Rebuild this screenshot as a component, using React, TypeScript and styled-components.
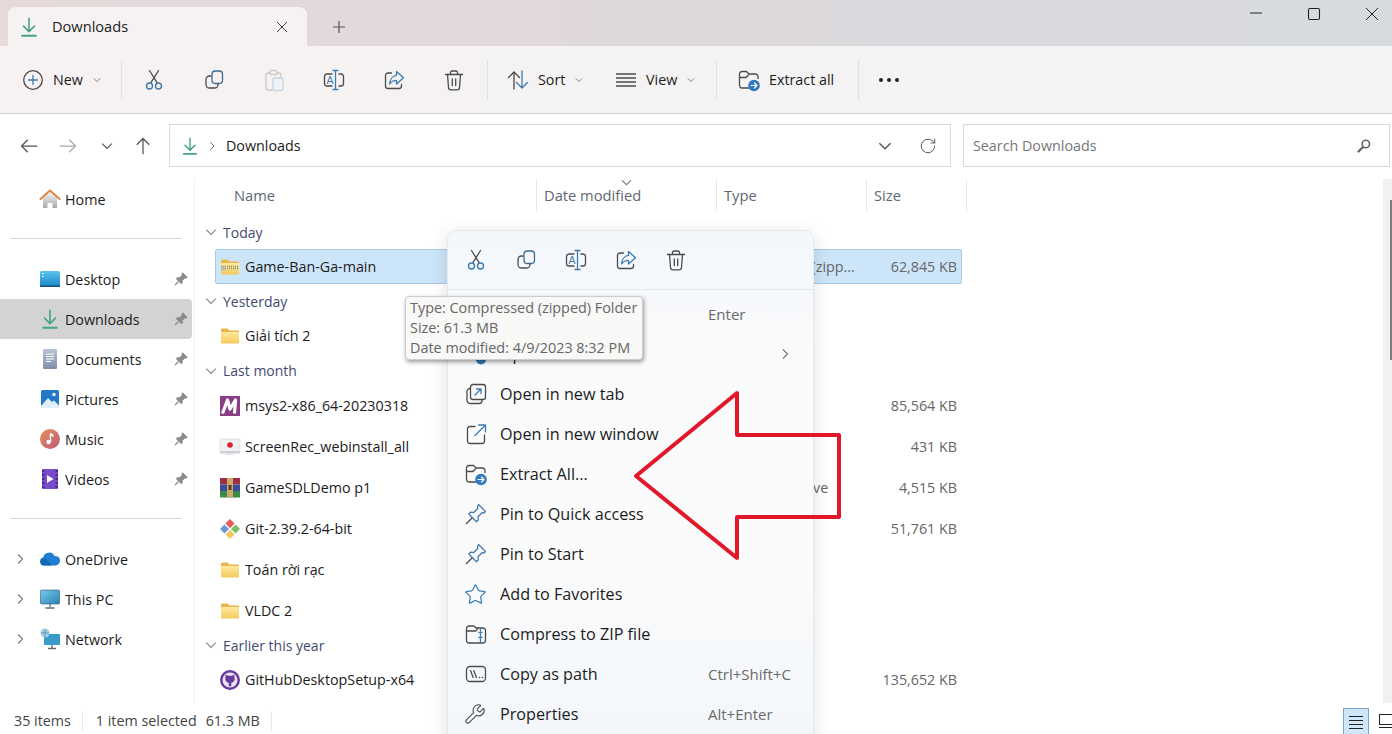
import React from 'react';
import styled, { createGlobalStyle } from 'styled-components';
import { RotateCw, Star, Wrench } from 'lucide-react';

const FONT = `"Open Sans", "Noto Sans", "Liberation Sans", sans-serif`;
const BLUE = '#3f7bb0';
const DARK = '#4b4b4b';

const GlobalStyle = createGlobalStyle`
  html, body {
    margin: 0;
    padding: 0;
    width: 100%;
    height: 100%;
    overflow: hidden;
    background: #fff;
  }
  #root {
    height: 100%;
  }
`;

/* icons */

const Ico: React.FC<{ size?: number; children: React.ReactNode }> = ({ size = 24, children }) => (
  <svg width={size} height={size} viewBox="0 0 24 24" fill="none" stroke={DARK} strokeWidth={1.3} strokeLinecap="round" strokeLinejoin="round">
    {children}
  </svg>
);

const DownloadIcon = ({ size = 24 }: { size?: number }) => (
  <Ico size={size}>
    <path d="M12 2.5V17M6 11l6 6 6-6" stroke="#45a287" strokeWidth={1.7} />
    <path d="M4.5 21.5h15" stroke="#45a287" strokeWidth={2} />
  </Ico>
);

const CutIcon = () => (
  <Ico>
    <path d="M7.5 2.5l7.6 12.2M16.5 2.5L8.9 14.7" />
    <circle cx="7.5" cy="18" r="3" stroke={BLUE} strokeWidth={1.4} />
    <circle cx="16.5" cy="18" r="3" stroke={BLUE} strokeWidth={1.4} />
  </Ico>
);

const CopyIcon = () => (
  <Ico>
    <rect x="10" y="3" width="10.5" height="12.5" rx="3.2" stroke="#3c6d92" />
    <path d="M9 8H7.5a3.5 3.5 0 0 0-3.5 3.5v5A3.5 3.5 0 0 0 7.5 20h5a3.5 3.5 0 0 0 3.5-3.5v-.5" />
  </Ico>
);

const PasteIcon = () => (
  <Ico>
    <path d="M8 5H6a2 2 0 0 0-2 2v13a2 2 0 0 0 2 2h4M15 5h2a2 2 0 0 1 2 2v2" stroke="#c9c9c9" />
    <rect x="8" y="2.5" width="7" height="4" rx="1.2" stroke="#c9c9c9" />
    <rect x="11" y="10" width="10" height="12.5" rx="2" stroke="#c5d5e2" fill="#eef3f7" />
  </Ico>
);

const RenameIcon = () => (
  <Ico>
    <path d="M10 6H5a2.5 2.5 0 0 0-2.5 2.5v7A2.5 2.5 0 0 0 5 18h5M17 6h2a2.5 2.5 0 0 1 2.5 2.5v7A2.5 2.5 0 0 1 19 18h-2" />
    <path d="M11 2.5h5M11 21.5h5M13.5 2.5v19" stroke={BLUE} />
    <text x="4.6" y="15.5" fontFamily="Liberation Sans, sans-serif" fontSize="10.5" fill={BLUE} stroke="none">A</text>
  </Ico>
);

const ShareIcon = () => (
  <Ico>
    <path d="M9.5 5H6a2.5 2.5 0 0 0-2.5 2.5v10.5A2.5 2.5 0 0 0 6 20.5h11a2.5 2.5 0 0 0 2.5-2.5v-1.5" />
    <path d="M14.5 3.5l7 6.2-7 6.3v-3.6c-3 0-5 1-6.8 3.6 0-4.3 2.6-8 6.8-8.6z" stroke={BLUE} />
  </Ico>
);

const TrashIcon = () => (
  <Ico>
    <path d="M3.5 6.5h17M8.5 6V4.5A1.5 1.5 0 0 1 10 3h4a1.5 1.5 0 0 1 1.5 1.5V6" />
    <path d="M5.5 6.5l1 13a2.5 2.5 0 0 0 2.5 2.4h6a2.5 2.5 0 0 0 2.5-2.4l1-13" />
    <path d="M10.3 11v6.5M13.7 11v6.5" />
  </Ico>
);

const PlusCircleIcon = () => (
  <Ico>
    <circle cx="12" cy="12" r="9.3" />
    <path d="M12 7.5v9M7.5 12h9" stroke={BLUE} />
  </Ico>
);

const SortIcon = () => (
  <Ico>
    <path d="M8 21V4M2.5 9.5L8 4l5.5 5.5" />
    <path d="M16 3v17M10.5 14.5L16 20l5.5-5.5" stroke={BLUE} />
  </Ico>
);

const ViewIcon = () => (
  <Ico>
    <path d="M2 6h20M2 10h20M2 14h20M2 18h20" strokeLinecap="butt" />
  </Ico>
);

const ExtractIcon = () => (
  <Ico>
    <path d="M12 20H5a2.5 2.5 0 0 1-2.5-2.5V6A2.5 2.5 0 0 1 5 3.5h4.5L12 6h6.5A2.5 2.5 0 0 1 21 8.5v2" />
    <path d="M3 9.5h6l2.5-2.5" />
    <circle cx="17" cy="17.5" r="5.8" fill="#2f79bd" stroke="none" />
    <path d="M14 17.5h5.6M17.5 15l2.5 2.5-2.5 2.5" stroke="#fff" strokeWidth={1.2} />
  </Ico>
);

const OpenWithIcon = () => (
  <Ico>
    <rect x="5" y="3" width="12" height="14" rx="2" />
    <circle cx="17" cy="17.5" r="5" fill="#2f79bd" stroke="none" />
  </Ico>
);

const NewTabIcon = () => (
  <Ico>
    <rect x="6.5" y="2.5" width="15" height="15" rx="2.5" />
    <path d="M6 6.5a3 3 0 0 0-3 3V18a3.5 3.5 0 0 0 3.5 3.5H15a3 3 0 0 0 3-3" />
    <path d="M11 13l6-6M12.5 7H17v4.5" stroke={BLUE} />
  </Ico>
);

const NewWindowIcon = () => (
  <Ico>
    <path d="M11 4.5H6A2.5 2.5 0 0 0 3.5 7v12A2.5 2.5 0 0 0 6 21.5h12a2.5 2.5 0 0 0 2.5-2.5v-6" />
    <path d="M11 13.5L21.5 3M14.5 3h7v7" stroke={BLUE} />
  </Ico>
);

const PinOutlineIcon = () => (
  <Ico>
    <path d="M14.5 2.5l7 7-1.5 1.5-2-.3-4 4 .3 3.2-1.8 1.8-7.7-7.7 1.8-1.8 3.2.3 4-4-.3-2z" stroke={BLUE} />
    <path d="M8 16l-5.5 5.5" />
  </Ico>
);

const ZipIcon = () => (
  <Ico>
    <path d="M2.5 6.5A2.5 2.5 0 0 1 5 4h5l2 2h7a2.5 2.5 0 0 1 2.5 2.5v10A2.5 2.5 0 0 1 19 21H5a2.5 2.5 0 0 1-2.5-2.5z" />
    <path d="M2.5 9h9.5l2-3" />
    <path d="M16.5 6v3M15 10.5h3M16.5 12v2M15 15.5h3M16.5 17v4" stroke={BLUE} />
  </Ico>
);

const PathIcon = () => (
  <Ico>
    <rect x="2.5" y="4.5" width="19" height="15" rx="3.5" />
    <path d="M6.5 8.5l2.6 7M9.8 8.5l2.6 7" />
    <path d="M15.5 15.5h.1M18.5 15.5h.1" strokeWidth={1.6} />
  </Ico>
);

const ChevronDown = ({ w = 9, c = '#666' }: { w?: number; c?: string }) => (
  <svg width={w} height={w} viewBox="0 0 10 10" fill="none" stroke={c} strokeWidth={1}>
    <path d="M1 3l4 4 4-4" />
  </svg>
);

const ChevronRight = ({ c = '#777', s = 12 }: { c?: string; s?: number }) => (
  <svg width={s} height={s} viewBox="0 0 12 12" fill="none" stroke={c} strokeWidth={1.1}>
    <path d="M4 1.5L8.5 6 4 10.5" />
  </svg>
);

const ArrowIcon = ({ dir, c = '#555' }: { dir: 'left' | 'right' | 'up'; c?: string }) => {
  const d = {
    left: 'M22 12H3M10.5 4.5L3 12l7.5 7.5',
    right: 'M2 12h19M13.5 4.5L21 12l-7.5 7.5',
    up: 'M12 22V3M4.5 10.5L12 3l7.5 7.5',
  }[dir];
  return (
    <svg width={20} height={20} viewBox="0 0 24 24" fill="none" stroke={c} strokeWidth={1.5}>
      <path d={d} />
    </svg>
  );
};

const SearchIcon = () => (
  <svg width={16} height={16} viewBox="0 0 16 16" fill="none" stroke="#666">
    <circle cx="9.8" cy="6" r="3.7" strokeWidth={1.6} />
    <path d="M7 9L2.5 13.5" strokeWidth={2.4} strokeLinecap="round" />
  </svg>
);

const PinIcon = () => (
  <svg width={16} height={16} viewBox="0 0 16 16" fill="#8b8b8b" stroke="#8b8b8b" strokeWidth={0.8} strokeLinejoin="round">
    <path d="M9.8 1.8l4.4 4.4-1 1-1.3-.2-2.6 2.6.2 2.2-1.1 1.1L3.2 7.7l1.1-1.1 2.2.2 2.6-2.6-.2-1.3z" />
    <path d="M5.3 10.7L2 14" strokeWidth={1.3} />
  </svg>
);

const FolderIcon = ({ zip }: { zip?: boolean }) => (
  <svg width={22} height={22} viewBox="0 0 22 22">
    <defs>
      <linearGradient id="folderBody" x1="0" y1="0" x2="0" y2="1">
        <stop offset="0" stopColor="#fdeb9e" />
        <stop offset="1" stopColor="#f5c95c" />
      </linearGradient>
    </defs>
    <path d="M2 5.5A1.5 1.5 0 0 1 3.5 3.500h5l2 2H19a1 1 0 0 1 1 1v3H2z" fill="#e8b64c" />
    <rect x="2" y="7" width="18" height="11.500" rx="1" fill="url(#folderBody)" />
    {zip && <path d="M2 10.500h18M2 12.500h18" stroke="#8d8a72" strokeWidth={1.4} strokeDasharray="1 1" />}
    {zip && <rect x="2" y="9.500" width="5" height="5" fill="#b9b9a8" opacity={0.7} />}
  </svg>
);

const MsysIcon = () => (
  <svg width={22} height={22} viewBox="0 0 22 22">
    <rect x="1" y="1" width="20" height="20" fill="#8a3f84" />
    <path d="M3.500 18.500L8.500 5l2.500 9L16.500 5l-1 13.500" fill="none" stroke="#fff" strokeWidth={3.2} strokeLinejoin="round" />
  </svg>
);

const ScreenRecIcon = () => (
  <svg width={22} height={22} viewBox="0 0 22 22">
    <rect x="1" y="3" width="20" height="13" rx="1" fill="#f1f1f3" stroke="#d4d4d8" strokeWidth={0.6} />
    <rect x="1" y="15" width="20" height="2.500" fill="#cfd1d6" />
    <circle cx="11" cy="9" r="2.800" fill="#d8232a" />
    <rect x="7" y="17.500" width="8" height="1.200" fill="#d9d9dd" />
  </svg>
);

const RarIcon = () => (
  <svg width={22} height={22} viewBox="0 0 22 22">
    <rect x="1" y="1" width="20" height="6.500" fill="#9c2f46" />
    <rect x="1" y="7.500" width="20" height="6.500" fill="#3a4d9a" />
    <rect x="1" y="14" width="20" height="6.500" fill="#3b8a4a" />
    <rect x="8" y="1" width="6" height="19.500" fill="#cfa76a" />
    <rect x="9.500" y="8" width="3" height="5" fill="#5a3b1d" />
  </svg>
);

const GitIcon = () => (
  <svg width={22} height={22} viewBox="0 0 22 22">
    <path d="M11 1l4.600 4.600-4.600 4.600-4.600-4.600z" fill="#e0605a" />
    <path d="M5.400 6.400L10 11l-4.600 4.600L1 11z" fill="#6a9ad6" />
    <path d="M16.600 6.400L21 11l-4.400 4.600L12 11z" fill="#7cbf6b" />
    <path d="M11 11.800l4.600 4.600L11 21l-4.600-4.600z" fill="#f0cc5f" />
  </svg>
);

const GitHubIcon = () => (
  <svg width={22} height={22} viewBox="0 0 22 22">
    <circle cx="11" cy="11" r="10" fill="#6a3a9c" />
    <circle cx="11" cy="11" r="7.500" fill="#ece6f3" />
    <path d="M6.800 5.500l2.200 1.200h4l2.200-1.200.4 3.200c.6 2.700-.8 4.600-3.300 5v3.500H9.700v-3.500c-2.500-.4-3.900-2.300-3.300-5z" fill="#6a3a9c" />
  </svg>
);

const HomeIcon = () => (
  <svg width={22} height={22} viewBox="0 0 22 22">
    <defs>
      <linearGradient id="homeBody" x1="0" y1="0" x2="0" y2="1">
        <stop offset="0" stopColor="#f4f4f4" />
        <stop offset="1" stopColor="#a9a9ab" />
      </linearGradient>
    </defs>
    <path d="M4 10l7-6 7 6v10h-4.500v-5h-5v5H4z" fill="url(#homeBody)" />
    <path d="M1.500 11L11 2.500 20.500 11" fill="none" stroke="#d98a4a" strokeWidth={2.200} strokeLinecap="round" strokeLinejoin="round" />
  </svg>
);

const DesktopIcon = () => (
  <svg width={22} height={22} viewBox="0 0 22 22">
    <defs>
      <linearGradient id="deskBody" x1="0" y1="0" x2="0" y2="1">
        <stop offset="0" stopColor="#5cc3ee" />
        <stop offset="1" stopColor="#1b86c6" />
      </linearGradient>
    </defs>
    <rect x="1" y="3" width="20" height="16" rx="1.500" fill="url(#deskBody)" />
    <rect x="1" y="17.500" width="20" height="1.500" fill="#14527d" />
    <path d="M3 5.500h1.500M3 8.500h1.500" stroke="#fff" strokeWidth={1.200} />
  </svg>
);

const DocsIcon = () => (
  <svg width={22} height={22} viewBox="0 0 22 22">
    <defs>
      <linearGradient id="docBody" x1="0" y1="0" x2="0" y2="1">
        <stop offset="0" stopColor="#b9c4d4" />
        <stop offset="1" stopColor="#7e8fa8" />
      </linearGradient>
    </defs>
    <rect x="4" y="1" width="14" height="20" rx="1" fill="url(#docBody)" />
    <path d="M7 6h8M7 8.500h8M7 11h8M7 13.500h5" stroke="#fff" strokeWidth={1} />
  </svg>
);

const PicturesIcon = () => (
  <svg width={22} height={22} viewBox="0 0 22 22">
    <rect x="2" y="2" width="18" height="18" rx="1.500" fill="#2378c7" />
    <path d="M2 18l7-8 4 4 2-1.500 5 5V20H2z" fill="#dff0fa" />
    <circle cx="15" cy="6.500" r="1.700" fill="#fff" />
  </svg>
);

const MusicIcon = () => (
  <svg width={22} height={22} viewBox="0 0 22 22">
    <defs>
      <linearGradient id="musicBody" x1="0" y1="0" x2="1" y2="1">
        <stop offset="0" stopColor="#e8905c" />
        <stop offset="1" stopColor="#b85a78" />
      </linearGradient>
    </defs>
    <circle cx="11" cy="11" r="10" fill="url(#musicBody)" />
    <path d="M11.500 5.500v8" stroke="#fff" strokeWidth={1.500} />
    <path d="M11.500 5.500c1 1.500 2.500 1.500 3 3" stroke="#fff" strokeWidth={1.500} fill="none" />
    <circle cx="9.500" cy="14" r="2.200" fill="#fff" />
  </svg>
);

const VideosIcon = () => (
  <svg width={22} height={22} viewBox="0 0 22 22">
    <rect x="3" y="1" width="16" height="20" rx="1" fill="#7a4bc9" />
    <path d="M3 3h2.500M3 7h2.500M3 11h2.500M3 15h2.500M3 19h2.500M16.500 3H19M16.500 7H19M16.500 11H19M16.500 15H19M16.500 19H19" stroke="#3f2278" strokeWidth={1.500} />
    <path d="M8 7l6.500 4L8 15z" fill="#fff" />
  </svg>
);

const OneDriveIcon = () => (
  <svg width={22} height={22} viewBox="0 0 22 22">
    <path d="M5 17.500a4 4 0 0 1-.8-7.900A6 6 0 0 1 15.500 8a4.800 4.800 0 0 1 1.500 9.500z" fill="#1f7fd0" />
    <path d="M5 17.500a3.500 3.500 0 0 1 0-7h2l6 7z" fill="#0f5fae" opacity={0.75} />
  </svg>
);

const PcIcon = () => (
  <svg width={22} height={22} viewBox="0 0 22 22">
    <defs>
      <linearGradient id="pcBody" x1="0" y1="0" x2="1" y2="1">
        <stop offset="0" stopColor="#79c9ea" />
        <stop offset="1" stopColor="#2a84b8" />
      </linearGradient>
    </defs>
    <rect x="1.500" y="2" width="19" height="14" rx="1" fill="url(#pcBody)" stroke="#35566e" strokeWidth={0.6} />
    <path d="M11 16v3M6.500 20h9" stroke="#5d6d79" strokeWidth={1.300} />
  </svg>
);

const NetworkIcon = () => (
  <svg width={22} height={22} viewBox="0 0 22 22">
    <rect x="5" y="6" width="16" height="11" rx="1" fill="#3a9ac9" />
    <path d="M13 17v3M9 20.500h8" stroke="#5d6d79" strokeWidth={1.300} />
    <circle cx="6" cy="5" r="4.500" fill="#a9cfe6" />
    <path d="M2 5h8M6 1v8" stroke="#5a8fb3" strokeWidth={0.9} />
  </svg>
);

const DetailsViewIcon = () => (
  <svg width={16} height={16} viewBox="0 0 16 16" fill="none" stroke="#222" strokeWidth={1}>
    <path d="M1 2.500h14M1 6.500h14M1 10.500h14M1 14.500h14" />
  </svg>
);

const TilesViewIcon = () => (
  <svg width={16} height={16} viewBox="0 0 16 16" fill="none" stroke="#222" strokeWidth={1}>
    <rect x="1.500" y="1.500" width="13" height="10" />
    <path d="M1 14.500h14" />
  </svg>
);

/* window shell */

const Window = styled.div`
  position: relative;
  width: 100vw;
  height: 100vh;
  overflow: hidden;
  display: flex;
  flex-direction: column;
  background: #fff;
  color: #1c1c1c;
  font-family: ${FONT};
  font-size: 14.3px;
`;

const TitleBar = styled.div`
  flex: 0 0 46px;
  display: flex;
  align-items: flex-end;
  padding-left: 8px;
  background: linear-gradient(90deg, #e6dadb 0%, #e1d8da 35%, #dcd9dd 60%, #d7dbdf 100%);
`;

const Tab = styled.div`
  width: 299px;
  height: 39px;
  box-sizing: border-box;
  display: flex;
  align-items: center;
  padding: 0 19px 0 10px;
  gap: 12px;
  background: #f7f2f2;
  border-radius: 8px 8px 0 0;
`;

const TabTitle = styled.span`
  flex: 1;
  font-size: 14.6px;
  padding-bottom: 2px;
`;

const NewTabButton = styled.div`
  width: 64px;
  height: 39px;
  display: flex;
  align-items: center;
  justify-content: center;
`;

const WindowControls = styled.div`
  margin-left: auto;
  margin-right: -9px;
  align-self: flex-start;
  display: flex;
`;

const WindowControl = styled.div`
  width: 58px;
  height: 28px;
  display: flex;
  align-items: center;
  justify-content: center;
`;

const Toolbar = styled.div`
  flex: 0 0 68px;
  box-sizing: border-box;
  display: flex;
  align-items: center;
  padding-left: 8px;
  background: linear-gradient(90deg, #f7f2f1 0%, #f5f2f2 35%, #f3f4f5 100%);
  border-bottom: 1px solid #cfcfcf;
`;

const ToolButton = styled.div<{ $w: number; $pad?: number }>`
  width: ${p => p.$w}px;
  height: 40px;
  box-sizing: border-box;
  display: flex;
  align-items: center;
  justify-content: ${p => (p.$pad === undefined ? 'center' : 'flex-start')};
  padding-left: ${p => p.$pad ?? 0}px;
  gap: 8px;
`;

const ToolChevron = styled.span`
  display: flex;
  margin-left: 2px;
`;

const ToolSeparator = styled.div`
  width: 1px;
  height: 40px;
  margin: 0 2px 0 3px;
  background: #e2e0e0;
`;

const Dots = styled.div`
  display: flex;
  gap: 4px;
`;

const Dot = styled.i`
  width: 4px;
  height: 4px;
  border-radius: 50%;
  background: #222;
`;

const AddressRow = styled.div`
  flex: 0 0 66px;
  box-sizing: border-box;
  display: flex;
  align-items: flex-start;
  padding: 10px 2px 0 10px;
`;

const NavButton = styled.div<{ $w: number }>`
  width: ${p => p.$w}px;
  height: 43px;
  display: flex;
  align-items: center;
  justify-content: center;
`;

const AddressBox = styled.div`
  width: 782px;
  height: 43px;
  margin-left: 9px;
  box-sizing: border-box;
  display: flex;
  align-items: center;
  padding: 0 13px 0 10px;
  border: 1px solid #d9d9d9;
`;

const CrumbSep = styled.span`
  display: flex;
  margin-left: 7px;
`;

const Crumb = styled.span`
  margin-left: 9px;
  flex: 1;
`;

const BoxEnd = styled.div`
  display: flex;
  align-items: center;
  gap: 27px;
`;

const SearchBox = styled.div`
  flex: 1;
  height: 43px;
  margin-left: 12px;
  box-sizing: border-box;
  display: flex;
  align-items: center;
  justify-content: space-between;
  padding: 0 17px 0 9px;
  border: 1px solid #d9d9d9;
  color: #777;
`;

/* sidebar */

const Body = styled.div`
  flex: 1;
  min-height: 0;
  display: flex;
`;

const Sidebar = styled.nav`
  flex: 0 0 195px;
  box-sizing: border-box;
  margin-top: -1px;
  border-right: 1px solid #f1f1f1;
`;

const NavItem = styled.div<{ $active?: boolean }>`
  width: 192px;
  height: 40px;
  box-sizing: border-box;
  display: flex;
  align-items: center;
  padding: 0 3px 0 14px;
  background: ${p => (p.$active ? '#d3d3d3' : 'transparent')};
  border-radius: 0 4px 4px 0;
`;

const Expander = styled.span`
  width: 25px;
  display: flex;
`;

const NavIcon = styled.span`
  width: 22px;
  height: 22px;
  display: flex;
  margin-right: 4px;
`;

const NavLabel = styled.span`
  flex: 1;
`;

const NavDivider = styled.div`
  height: 1px;
  margin: 19px 12px 20px 10px;
  background: #d6d6d6;
`;

/* file list */

const List = styled.section`
  flex: 1;
  min-width: 0;
`;

const ColumnHeader = styled.div`
  height: 31px;
  margin-bottom: 4px;
  width: 772px;
  display: grid;
  grid-template-columns: 342px 180px 150px 100px;
  color: #5d6873;
  font-size: 14.7px;
`;

const ColumnCell = styled.div<{ $pad: number }>`
  position: relative;
  display: flex;
  align-items: center;
  padding: 0 0 2px ${p => p.$pad}px;
  border-right: 1px solid #e6e6e6;
`;

const SortMark = styled.span`
  position: absolute;
  left: 84px;
  top: -3px;
  display: flex;
`;

const GroupTitle = styled.div<{ $h: number }>`
  height: ${p => p.$h}px;
  margin-left: 10px;
  display: flex;
  align-items: center;
  gap: 6px;
  color: #3f4b70;
  font-size: 14px;
`;

const Row = styled.div<{ $selected?: boolean }>`
  width: 747px;
  height: 35px;
  margin-left: 20px;
  box-sizing: border-box;
  display: grid;
  grid-template-columns: 508px 130px 1fr;
  align-items: center;
  background: ${p => (p.$selected ? '#cde5f9' : 'transparent')};
  border: 1px solid ${p => (p.$selected ? '#a5cbe9' : 'transparent')};
  border-radius: 2px;
  & + & {
    margin-top: 6px;
  }
`;

const NameCell = styled.div`
  display: flex;
  align-items: center;
  gap: 4px;
  padding-left: 3px;
`;

const TypeCell = styled.div`
  color: #666;
  white-space: nowrap;
`;

const SizeCell = styled.div`
  color: #666;
  text-align: right;
  padding-right: 4px;
`;

const ScrollTrack = styled.div`
  flex: 0 0 9px;
  margin-top: -1px;
  background: #f1f1f1;
  display: flex;
  justify-content: flex-end;
`;

const ScrollThumb = styled.div`
  width: 2px;
  height: 160px;
  margin-top: 21px;
  background: #7d7d7d;
`;

/* status bar */

const StatusBar = styled.footer`
  flex: 0 0 27px;
  box-sizing: border-box;
  display: flex;
  align-items: center;
  padding: 5px 0 0 14px;
  color: #444;
`;

const StatusText = styled.span`
  display: flex;
  gap: 9px;
  padding-right: 11px;
  height: 20px;
  line-height: 20px;
`;

const StatusDivider = styled.span`
  width: 1px;
  height: 20px;
  margin-right: 13px;
  background: #e8e8e8;
`;

const ViewSwitch = styled.div`
  margin-left: auto;
  display: flex;
  gap: 9px;
  width: 49px;
  align-self: flex-end;
`;

const ViewButton = styled.div<{ $on?: boolean }>`
  flex: 0 0 ${p => (p.$on ? 26 : 16)}px;
  height: 26px;
  box-sizing: border-box;
  display: flex;
  align-items: center;
  justify-content: center;
  background: ${p => (p.$on ? '#cfe5f8' : 'transparent')};
  border: ${p => (p.$on ? '1px solid #7ba6c6' : 'none')};
  border-bottom: none;
`;

/* overlays */

const ContextMenu = styled.div`
  position: absolute;
  left: 447px;
  top: 230px;
  width: 367px;
  height: 520px;
  box-sizing: border-box;
  border: 1px solid #e6e8ec;
  border-radius: 9px;
  background: linear-gradient(180deg, #f3f7fc 0%, #f9fafb 22%, #fbfbfb 60%, #f3f7fb 97%);
  box-shadow: 0 4px 18px rgba(0, 0, 0, 0.13);
  font-size: 16.2px;
`;

const QuickBar = styled.div`
  height: 58px;
  display: flex;
  align-items: center;
  padding-left: 3px;
  border-bottom: 1px solid #e3e7ec;
`;

const QuickAction = styled.div`
  width: 50px;
  display: flex;
  justify-content: center;
`;

const MenuItems = styled.div`
  padding-top: 4px;
`;

const MenuItem = styled.div`
  height: 40px;
  box-sizing: border-box;
  display: grid;
  grid-template-columns: 24px 196px 1fr;
  column-gap: 12px;
  align-items: center;
  padding: 0 22px 0 16px;
`;

const MenuIcon = styled.span`
  display: flex;
`;

const Shortcut = styled.span`
  font-size: 15px;
  color: #6a6a6a;
  white-space: nowrap;
`;

const Submenu = styled.span`
  justify-self: end;
  display: flex;
`;

const Tooltip = styled.div`
  position: absolute;
  left: 405px;
  top: 296px;
  width: 238px;
  height: 64px;
  box-sizing: border-box;
  padding: 1px 4px;
  background: #f8f8f6;
  border: 1px solid #cdcdcd;
  border-radius: 4px;
  box-shadow: 1px 2px 4px rgba(0, 0, 0, 0.4);
  color: #666;
  font-size: 14.4px;
  line-height: 20px;
  white-space: nowrap;
`;

const RedArrow = styled.svg`
  position: absolute;
  left: 630px;
  top: 386px;
`;

/* data */

const pinned: [string, React.ReactNode][] = [
  ['Desktop', <DesktopIcon />],
  ['Downloads', <DownloadIcon size={22} />],
  ['Documents', <DocsIcon />],
  ['Pictures', <PicturesIcon />],
  ['Music', <MusicIcon />],
  ['Videos', <VideosIcon />],
];

const places: [string, React.ReactNode][] = [
  ['OneDrive', <OneDriveIcon />],
  ['This PC', <PcIcon />],
  ['Network', <NetworkIcon />],
];

interface FileRow {
  name: string;
  icon: React.ReactNode;
  type?: string;
  size?: string;
  selected?: boolean;
}

const groups: { title: string; height: number; rows: FileRow[] }[] = [
  {
    title: 'Today',
    height: 34,
    rows: [{ name: 'Game-Ban-Ga-main', icon: <FolderIcon zip />, type: 'Compressed (zipp...', size: '62,845 KB', selected: true }],
  },
  {
    title: 'Yesterday',
    height: 34,
    rows: [{ name: 'Giải tích 2', icon: <FolderIcon /> }],
  },
  {
    title: 'Last month',
    height: 35,
    rows: [
      { name: 'msys2-x86_64-20230318', icon: <MsysIcon />, size: '85,564 KB' },
      { name: 'ScreenRec_webinstall_all', icon: <ScreenRecIcon />, size: '431 KB' },
      { name: 'GameSDLDemo p1', icon: <RarIcon />, type: 'WinRAR archive', size: '4,515 KB' },
      { name: 'Git-2.39.2-64-bit', icon: <GitIcon />, size: '51,761 KB' },
      { name: 'Toán rời rạc', icon: <FolderIcon /> },
      { name: 'VLDC 2', icon: <FolderIcon /> },
    ],
  },
  {
    title: 'Earlier this year',
    height: 34,
    rows: [{ name: 'GitHubDesktopSetup-x64', icon: <GitHubIcon />, size: '135,652 KB' }],
  },
];

const menu: { label: string; icon: React.ReactNode; shortcut?: string; more?: boolean }[] = [
  { label: 'Open', icon: <NewWindowIcon />, shortcut: 'Enter' },
  { label: 'Open with...', icon: <OpenWithIcon />, more: true },
  { label: 'Open in new tab', icon: <NewTabIcon /> },
  { label: 'Open in new window', icon: <NewWindowIcon /> },
  { label: 'Extract All...', icon: <ExtractIcon /> },
  { label: 'Pin to Quick access', icon: <PinOutlineIcon /> },
  { label: 'Pin to Start', icon: <PinOutlineIcon /> },
  { label: 'Add to Favorites', icon: <Star size={23} strokeWidth={1.3} color={BLUE} /> },
  { label: 'Compress to ZIP file', icon: <ZipIcon /> },
  { label: 'Copy as path', icon: <PathIcon />, shortcut: 'Ctrl+Shift+C' },
  { label: 'Properties', icon: <Wrench size={22} strokeWidth={1.2} color={DARK} />, shortcut: 'Alt+Enter' },
];

const App: React.FC = () => (
  <Window>
    <GlobalStyle />
    <TitleBar>
      <Tab>
        <DownloadIcon size={22} />
        <TabTitle>Downloads</TabTitle>
        <svg width={12} height={12} viewBox="0 0 12 12" stroke="#444" strokeWidth={1}>
          <path d="M1 1l10 10M11 1L1 11" />
        </svg>
      </Tab>
      <NewTabButton>
        <svg width={14} height={14} viewBox="0 0 14 14" stroke="#555" strokeWidth={1.2}>
          <path d="M7 1v12M1 7h12" />
        </svg>
      </NewTabButton>
      <WindowControls>
        <WindowControl>
          <svg width={14} height={14} viewBox="0 0 14 14" stroke="#222" strokeWidth={1}>
            <path d="M1 6h12" />
          </svg>
        </WindowControl>
        <WindowControl>
          <svg width={14} height={14} viewBox="0 0 14 14" fill="none" stroke="#222" strokeWidth={1.1}>
            <rect x="1.500" y="1.500" width="11" height="11" rx="1.500" />
          </svg>
        </WindowControl>
        <WindowControl>
          <svg width={14} height={14} viewBox="0 0 14 14" stroke="#222" strokeWidth={1}>
            <path d="M1 1l12 12M13 1L1 13" />
          </svg>
        </WindowControl>
      </WindowControls>
    </TitleBar>

    <Toolbar>
      <ToolButton $w={110} $pad={13}>
        <PlusCircleIcon />
        New
        <ToolChevron><ChevronDown w={8} /></ToolChevron>
      </ToolButton>
      <ToolSeparator />
      <ToolButton $w={60}><CutIcon /></ToolButton>
      <ToolButton $w={60}><CopyIcon /></ToolButton>
      <ToolButton $w={60}><PasteIcon /></ToolButton>
      <ToolButton $w={60}><RenameIcon /></ToolButton>
      <ToolButton $w={60}><ShareIcon /></ToolButton>
      <ToolButton $w={60}><TrashIcon /></ToolButton>
      <ToolSeparator />
      <ToolButton $w={110} $pad={16}>
        <SortIcon />
        Sort
        <ToolChevron><ChevronDown w={8} /></ToolChevron>
      </ToolButton>
      <ToolButton $w={113} $pad={14}>
        <ViewIcon />
        View
        <ToolChevron><ChevronDown w={8} /></ToolChevron>
      </ToolButton>
      <ToolSeparator />
      <ToolButton $w={136} $pad={18}>
        <ExtractIcon />
        Extract all
      </ToolButton>
      <ToolSeparator />
      <ToolButton $w={56}>
        <Dots><Dot /><Dot /><Dot /></Dots>
      </ToolButton>
    </Toolbar>

    <AddressRow>
      <NavButton $w={38}><ArrowIcon dir="left" /></NavButton>
      <NavButton $w={40}><ArrowIcon dir="right" c="#a9a9a9" /></NavButton>
      <NavButton $w={38}><ChevronDown w={12} c="#555" /></NavButton>
      <NavButton $w={34}><ArrowIcon dir="up" /></NavButton>
      <AddressBox>
        <DownloadIcon size={20} />
        <CrumbSep><ChevronRight c="#555" s={10} /></CrumbSep>
        <Crumb>Downloads</Crumb>
        <BoxEnd>
          <ChevronDown w={14} c="#555" />
          <RotateCw size={18} strokeWidth={1.3} color="#555" />
        </BoxEnd>
      </AddressBox>
      <SearchBox>
        Search Downloads
        <SearchIcon />
      </SearchBox>
    </AddressRow>

    <Body>
      <Sidebar>
        <NavItem>
          <Expander />
          <NavIcon><HomeIcon /></NavIcon>
          <NavLabel>Home</NavLabel>
        </NavItem>
        <NavDivider />
        {pinned.map(([label, icon]) => (
          <NavItem key={label} $active={label === 'Downloads'}>
            <Expander />
            <NavIcon>{icon}</NavIcon>
            <NavLabel>{label}</NavLabel>
            <PinIcon />
          </NavItem>
        ))}
        <NavDivider />
        {places.map(([label, icon]) => (
          <NavItem key={label}>
            <Expander><ChevronRight /></Expander>
            <NavIcon>{icon}</NavIcon>
            <NavLabel>{label}</NavLabel>
          </NavItem>
        ))}
      </Sidebar>

      <List>
        <ColumnHeader>
          <ColumnCell $pad={39}>Name</ColumnCell>
          <ColumnCell $pad={7}>
            <SortMark><ChevronDown w={11} c="#777" /></SortMark>
            Date modified
          </ColumnCell>
          <ColumnCell $pad={7}>Type</ColumnCell>
          <ColumnCell $pad={7}>Size</ColumnCell>
        </ColumnHeader>
        {groups.map(group => (
          <React.Fragment key={group.title}>
            <GroupTitle $h={group.height}>
              <ChevronDown w={12} c="#888" />
              {group.title}
            </GroupTitle>
            {group.rows.map(row => (
              <Row key={row.name} $selected={row.selected}>
                <NameCell>{row.icon}{row.name}</NameCell>
                <TypeCell>{row.type}</TypeCell>
                <SizeCell>{row.size}</SizeCell>
              </Row>
            ))}
          </React.Fragment>
        ))}
      </List>

      <ScrollTrack>
        <ScrollThumb />
      </ScrollTrack>
    </Body>

    <StatusBar>
      <StatusText>35 items</StatusText>
      <StatusDivider />
      <StatusText>
        <span>1 item selected</span>
        <span>61.3 MB</span>
      </StatusText>
      <StatusDivider />
      <ViewSwitch>
        <ViewButton $on><DetailsViewIcon /></ViewButton>
        <ViewButton><TilesViewIcon /></ViewButton>
      </ViewSwitch>
    </StatusBar>

    <ContextMenu>
      <QuickBar>
        <QuickAction><CutIcon /></QuickAction>
        <QuickAction><CopyIcon /></QuickAction>
        <QuickAction><RenameIcon /></QuickAction>
        <QuickAction><ShareIcon /></QuickAction>
        <QuickAction><TrashIcon /></QuickAction>
      </QuickBar>
      <MenuItems>
        {menu.map(item => (
          <MenuItem key={item.label}>
            <MenuIcon>{item.icon}</MenuIcon>
            <span>{item.label}</span>
            {item.shortcut && <Shortcut>{item.shortcut}</Shortcut>}
            {item.more && <Submenu><ChevronRight /></Submenu>}
          </MenuItem>
        ))}
      </MenuItems>
    </ContextMenu>

    <Tooltip>
      Type: Compressed (zipped) Folder
      <br />
      Size: 61.3 MB
      <br />
      Date modified: 4/9/2023 8:32 PM
    </Tooltip>

    <RedArrow width={216} height={180} viewBox="0 0 216 180">
      <polygon
        points="6,90 107,7 107,49 209,49 209,131 107,131 107,172"
        fill="none"
        stroke="#e3172a"
        strokeWidth={4}
        strokeLinejoin="round"
      />
    </RedArrow>
  </Window>
);

export default App;
